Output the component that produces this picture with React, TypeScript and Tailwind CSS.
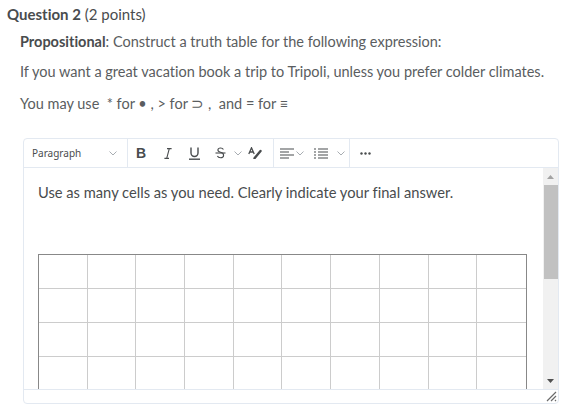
import type { ReactNode } from 'react'

const COLS = 10
const ROWS = 5

function Chevron() {
  return (
    <svg width="8" height="5" viewBox="0 0 8 5" className="shrink-0">
      <path d="M0.5 0.5 L4 4 L7.5 0.5" fill="none" stroke="#a8adb2" strokeWidth="1" />
    </svg>
  )
}

function Btn({ w, children }: { w: string; children: ReactNode }) {
  return <span className={`flex h-full items-center justify-center ${w}`}>{children}</span>
}

function Toolbar() {
  return (
    <div className="flex h-[29px] border-b border-[#e3e9f1] text-[#494c4e]">
      {/* block format */}
      <div className="flex w-[103px] items-center pl-[8px] pr-[10px]">
        <span className="flex-1 text-[10px] font-['Noto_Sans',sans-serif] text-[#494c4e]">Paragraph</span>
        <Chevron />
      </div>

      {/* text styles */}
      <div className="flex w-[146px] border-l border-[#e3e9f1]">
        <Btn w="w-[26px]">
          <span className="font-['Liberation_Sans',sans-serif] text-[14px] font-black leading-none">B</span>
        </Btn>
        <Btn w="w-[28px]">
          <svg width="8" height="11" viewBox="0 0 8 11">
            <path d="M3 0.6 H7.6 M0.4 10.4 H5 M5.3 0.6 L2.7 10.4" fill="none" stroke="#494c4e" strokeWidth="1.1" />
          </svg>
        </Btn>
        <Btn w="w-[24px]">
          <svg width="13" height="13" viewBox="0 0 13 13">
            <path d="M3 0.5 V6 A3.5 3.5 0 0 0 10 6 V0.5" fill="none" stroke="#494c4e" strokeWidth="1.4" />
            <path d="M1 12.2 H12" stroke="#494c4e" strokeWidth="1.4" />
          </svg>
        </Btn>
        <Btn w="w-[28px]">
          <svg width="11" height="12" viewBox="0 0 11 12">
            <path
              d="M8.4 2.6 C7.9 1.5 7 1 5.6 1 C4 1 2.9 1.8 2.9 3 C2.9 4.2 3.9 4.8 5.6 5.2 C7.4 5.7 8.6 6.4 8.6 8.2 C8.6 9.8 7.3 10.8 5.5 10.8 C4 10.8 2.9 10.2 2.4 9"
              fill="none"
              stroke="#494c4e"
              strokeWidth="1.1"
            />
            <path d="M0.5 6 H10.5" stroke="#494c4e" strokeWidth="1.1" />
          </svg>
        </Btn>
        <Btn w="w-[8px]">
          <Chevron />
        </Btn>
        <Btn w="w-[26px]">
          <svg width="14" height="12" viewBox="0 0 14 12">
            <path d="M0.8 7 L3.5 0.8 L6.2 7 M1.8 5 H5.2" fill="none" stroke="#494c4e" strokeWidth="1.3" />
            <path d="M6.5 11.2 L12.5 4" stroke="#494c4e" strokeWidth="2.4" strokeLinecap="round" />
          </svg>
        </Btn>
      </div>

      {/* alignment and lists */}
      <div className="flex w-[76px] items-center border-l border-[#e3e9f1] pl-[6px]">
        <svg width="14" height="11" viewBox="0 0 14 11">
          <path d="M0 1 H14 M0 4 H9 M0 7 H14 M0 10 H9" stroke="#494c4e" strokeWidth="1.2" />
        </svg>
        <span className="ml-[2px]">
          <Chevron />
        </span>
        <svg width="14" height="11" viewBox="0 0 14 11" className="ml-[10px]">
          <path
            d="M0 1 H2 M0 4 H2 M0 7 H2 M0 10 H2 M4 1 H14 M4 4 H14 M4 7 H14 M4 10 H14"
            stroke="#494c4e"
            strokeWidth="1.2"
          />
        </svg>
        <span className="ml-[9px]">
          <Chevron />
        </span>
      </div>

      {/* more */}
      <div className="flex flex-1 items-center border-l border-[#e3e9f1] pl-[10px]">
        <svg width="11" height="3" viewBox="0 0 11 3">
          <circle cx="1.5" cy="1.5" r="1.2" fill="#494c4e" />
          <circle cx="5.5" cy="1.5" r="1.2" fill="#494c4e" />
          <circle cx="9.5" cy="1.5" r="1.2" fill="#494c4e" />
        </svg>
      </div>
    </div>
  )
}

function Scrollbar() {
  return (
    <div className="flex w-[15px] flex-col bg-[#f1f1f1]">
      <div className="flex h-[17px] items-center justify-center">
        <svg width="7" height="4" viewBox="0 0 7 4">
          <path d="M0 4 L3.5 0 L7 4 Z" fill="#a3a3a3" />
        </svg>
      </div>
      <div className="ml-[1px] h-[94px] bg-[#c1c1c1]" />
      <div className="flex-1" />
      <div className="flex h-[17px] items-center justify-center">
        <svg width="7" height="4" viewBox="0 0 7 4">
          <path d="M0 0 L7 0 L3.5 4 Z" fill="#505050" />
        </svg>
      </div>
    </div>
  )
}

export default function App() {
  return (
    <div className="min-h-screen bg-white font-['Lato',sans-serif] text-[#494c4e] [font-variant-ligatures:none]">
      <h2 className="px-[7px] pt-[4px] text-[15px] leading-[20px]">
        <span className="font-bold">Question 2</span> (2 points)
      </h2>

      <div className="pl-[20px] text-[14.5px] leading-[20px] text-[#5a5d60]">
        <p className="mt-[8px]">
          <span className="font-bold text-[#494c4e]">Propositional</span>: Construct a truth table for the following expression:
        </p>
        <p className="mt-[10px]">If you want a great vacation book a trip to Tripoli, unless you prefer colder climates.</p>
        <p className="mt-[12px] whitespace-pre">
          You may use  * for • , &gt; for ⊃ ,  and = for ≡
        </p>
      </div>

      <div className="ml-[23px] mt-[24px] flex h-[266px] w-[536px] flex-col rounded-[4px] border border-[#e3e9f1]">
        <Toolbar />

        <div className="flex h-[221px]">
          <div className="flex-1 overflow-hidden pl-[14px] pt-[14px]">
            <p className="text-[14.7px] leading-[20px] text-[#494c4e]">
              Use as many cells as you need. Clearly indicate your final answer.
            </p>
            <table className="mt-[52px] w-[489px] table-fixed border-separate border-spacing-0 border-x border-t border-[#888888]">
              <tbody>
                {Array.from({ length: ROWS }).map((_, r) => (
                  <tr key={r}>
                    {Array.from({ length: COLS }).map((_, c) => (
                      <td
                        key={c}
                        className={`h-[34px] border-b border-[#cccccc] ${c < COLS - 1 ? 'border-r' : ''}`}
                      />
                    ))}
                  </tr>
                ))}
              </tbody>
            </table>
          </div>
          <Scrollbar />
        </div>

        <div className="flex h-[14px] justify-end border-t border-[#e3e9f1] pr-[1px]">
          <svg width="12" height="12" viewBox="0 0 12 12">
            <path d="M11 2 L2 11 M11 6 L6 11 M11 10 L10 11" stroke="#6b6b6b" strokeWidth="1.2" />
          </svg>
        </div>
      </div>
    </div>
  )
}
